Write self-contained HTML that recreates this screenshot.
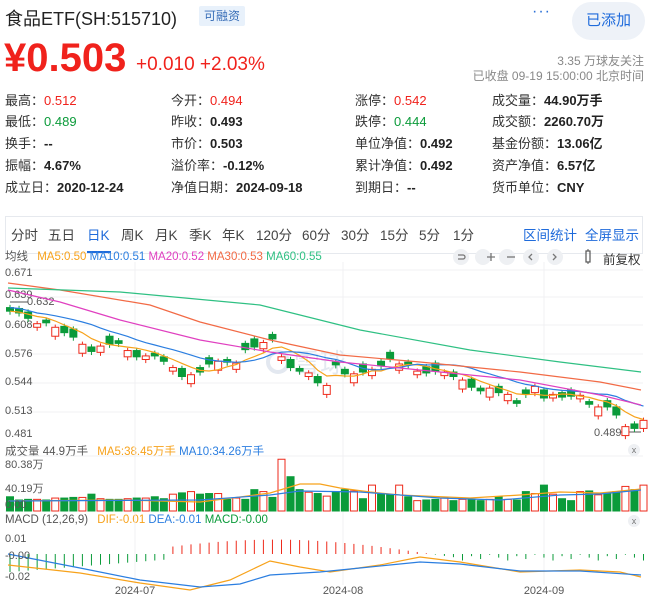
<!DOCTYPE html>
<html><head><meta charset="utf-8"><style>
body{margin:0;width:649px;height:599px;overflow:hidden;background:#fff;font-family:"Liberation Sans","Noto Sans CJK SC",sans-serif;color:#333;position:relative}
.a{position:absolute;white-space:nowrap}
.r{color:#f0221c}.g{color:#0b9b3a}
.st{font-size:13px;color:#333}
.st b{font-weight:bold;color:#222}
.tab{font-size:13.5px;color:#444}
</style></head><body>
<div class="a" style="left:5px;top:5px;font-size:18px;color:#222">食品ETF(SH:515710)</div>
<div class="a" style="left:199px;top:6px;width:46px;height:20px;background:#e8f1fb;color:#3a6fb8;font-size:12px;line-height:20px;text-align:center;border-radius:2px">可融资</div>
<div class="a" style="left:532px;top:3px;font-size:16px;color:#2a6fd6;letter-spacing:1px">···</div>
<div class="a" style="left:572px;top:2px;width:73px;height:38px;background:#eef2f8;border-radius:19px;color:#1f6bdb;font-size:15px;line-height:38px;text-align:center">已添加</div>
<div class="a r" style="left:4px;top:36px;font-size:40px;font-weight:bold;letter-spacing:0px">¥0.503</div>
<div class="a r" style="left:136px;top:54px;font-size:19px">+0.010 +2.03%</div>
<div class="a" style="right:5px;top:52px;font-size:12px;color:#888">3.35 万球友关注</div>
<div class="a" style="right:5px;top:67px;font-size:12px;color:#888">已收盘 09-19 15:00:00 北京时间</div>
<div class="a st" style="left:5px;top:90px">最高：<span class="r">0.512</span></div>
<div class="a st" style="left:171px;top:90px">今开：<span class="r">0.494</span></div>
<div class="a st" style="left:355px;top:90px">涨停：<span class="r">0.542</span></div>
<div class="a st" style="left:492px;top:90px">成交量：<b>44.90万手</b></div>
<div class="a st" style="left:5px;top:111px">最低：<span class="g">0.489</span></div>
<div class="a st" style="left:171px;top:111px">昨收：<b>0.493</b></div>
<div class="a st" style="left:355px;top:111px">跌停：<span class="g">0.444</span></div>
<div class="a st" style="left:492px;top:111px">成交额：<b>2260.70万</b></div>
<div class="a st" style="left:5px;top:133px">换手：<b>--</b></div>
<div class="a st" style="left:171px;top:133px">市价：<b>0.503</b></div>
<div class="a st" style="left:355px;top:133px">单位净值：<b>0.492</b></div>
<div class="a st" style="left:492px;top:133px">基金份额：<b>13.06亿</b></div>
<div class="a st" style="left:5px;top:155px">振幅：<b>4.67%</b></div>
<div class="a st" style="left:171px;top:155px">溢价率：<b>-0.12%</b></div>
<div class="a st" style="left:355px;top:155px">累计净值：<b>0.492</b></div>
<div class="a st" style="left:492px;top:155px">资产净值：<b>6.57亿</b></div>
<div class="a st" style="left:5px;top:177px">成立日：<b>2020-12-24</b></div>
<div class="a st" style="left:171px;top:177px">净值日期：<b>2024-09-18</b></div>
<div class="a st" style="left:355px;top:177px">到期日：<b>--</b></div>
<div class="a st" style="left:492px;top:177px">货币单位：<b>CNY</b></div>

<div class="a" style="left:5px;top:216px;width:638px;height:38px;border:1px solid #e6e9ee;box-sizing:border-box"></div>
<div class="a tab" style="left:11px;top:224px">分时</div>
<div class="a tab" style="left:48px;top:224px">五日</div>
<div class="a tab" style="left:87px;top:224px;color:#1f6bdb">日K</div>
<div class="a" style="left:87px;top:251px;width:24px;height:2px;background:#1f6bdb"></div>
<div class="a tab" style="left:121px;top:224px">周K</div>
<div class="a tab" style="left:155px;top:224px">月K</div>
<div class="a tab" style="left:189px;top:224px">季K</div>
<div class="a tab" style="left:222px;top:224px">年K</div>
<div class="a tab" style="left:256px;top:224px">120分</div>
<div class="a tab" style="left:302px;top:224px">60分</div>
<div class="a tab" style="left:341px;top:224px">30分</div>
<div class="a tab" style="left:380px;top:224px">15分</div>
<div class="a tab" style="left:419px;top:224px">5分</div>
<div class="a tab" style="left:453px;top:224px">1分</div>
<div class="a tab" style="left:523px;top:224px;color:#1f6bdb">区间统计</div>
<div class="a tab" style="left:585px;top:224px;color:#1f6bdb">全屏显示</div>

<div class="a" style="left:5px;top:248px;font-size:11.5px;color:#555">均线 <span style="color:#f7a21b;margin-left:6px">MA5:0.50</span> <span style="color:#2b7ee0">MA10:0.51</span> <span style="color:#e040c0">MA20:0.52</span> <span style="color:#f26a45">MA30:0.53</span> <span style="color:#2fc083">MA60:0.55</span></div>
<div class="a" style="left:603px;top:249px;font-size:12.5px;color:#333">前复权</div>
<div class="a" style="left:5px;top:443px;font-size:11.5px;color:#555">成交量 44.9万手 <span style="color:#f7a21b;margin-left:6px">MA5:38.45万手</span> <span style="color:#2b7ee0">MA10:34.26万手</span></div>
<div class="a" style="left:5px;top:514px;font-size:11.5px;color:#555">MACD (12,26,9) <span style="color:#f7a21b;margin-left:6px">DIF:-0.01</span> <span style="color:#2b7ee0">DEA:-0.01</span> <span style="color:#0b9b3a">MACD:-0.00</span></div>

<svg id="s" class="a" style="left:0;top:0" width="649" height="599"></svg>
<script>
var s=document.getElementById('s'),h='';
function T(x,y,t,c,sz,a){h+='<text x="'+x+'" y="'+y+'" fill="'+(c||'#555')+'" font-size="'+(sz||11.5)+'" text-anchor="'+(a||'start')+'" font-family="Liberation Sans,Noto Sans CJK SC,sans-serif">'+t+'</text>';}
[486,508,532,556,580].forEach(function(x,i){h+='<circle cx="'+(x-25)+'" cy="257" r="8" fill="#eef0f3"/>';});
var ic=['M458 255h5a2 2 0 0 1 0 4h-5','M491 253v8M487 257h8','M507 257h8','M532 254l-3 3 3 3','M553 254l3 3-3 3'];
ic.forEach(function(d){h+='<path d="'+d+'" stroke="#777" stroke-width="1.3" fill="none"/>';});
h+='<rect x="586" y="251" width="4" height="11" fill="none" stroke="#555" stroke-width="1.2"/><path d="M588 249v2M588 262v2" stroke="#555"/>';
[270,297,325,354,383,412].forEach(function(y){h+='<line x1="5" x2="643" y1="'+y+'" y2="'+y+'" stroke="#f0f1f3"/>';});
[135,343,544].forEach(function(x){h+='<line x1="'+x+'" x2="'+x+'" y1="262" y2="585" stroke="#f0f1f3"/>';});
[['0.671',276],['0.639',298],['0.608',328],['0.576',357],['0.544',385],['0.513',414],['0.481',437]].forEach(function(a){T(5,a[1],a[0],'#555',11);});
T(27,305,'0.632','#555',11);h+='<line x1="10" x2="28" y1="302" y2="302" stroke="#555"/>';
T(594,436,'0.489','#555',11);h+='<line x1="620" x2="641" y1="432" y2="432" stroke="#555"/>';
h+='<circle cx="278" cy="362" r="10" fill="none" stroke="#e3e8f0" stroke-width="4"/><text x="294" y="372" fill="#e3e8f0" font-size="26" font-family="Noto Sans CJK SC">雪球</text>';
var C=[.625,.623,.617,.611,.612,.607,.601,.596,.588,.58,.586,.588,.589,.581,.574,.575,.575,.569,.562,.552,.554,.557,.566,.569,.568,.567,.582,.585,.59,.594,.574,.562,.558,.556,.545,.542,.565,.555,.555,.557,.56,.564,.572,.566,.565,.558,.556,.558,.557,.552,.548,.54,.536,.539,.534,.532,.522,.532,.541,.528,.532,.529,.53,.531,.521,.518,.518,.509,.496,.494,.503];
var n=C.length,x0=10,dx=9.05;function Y(p){return 270+(0.671-p)*895;}
var O=[C[0]+.004];for(var i=1;i<n;i++){var up=(i*7%5)<2;O[i]=up?C[i]-(.004+(i%3)*.003):C[i]+(.003+(i%4)*.002);}
O[n-1]=.494;
for(i=0;i<n;i++){var x=x0+i*dx,o=O[i],c=C[i],u=c>=o,col=u?'#ee2a1b':'#0b9b3a';var hi=Math.max(o,c)+.003,lo=Math.min(o,c)-.004;
h+='<line x1="'+x+'" x2="'+x+'" y1="'+Y(hi)+'" y2="'+Y(lo)+'" stroke="'+col+'"/>';
var t=Y(Math.max(o,c)),hh=Math.max(1.5,Y(Math.min(o,c))-t);
h+='<rect x="'+(x-3.5)+'" y="'+t+'" width="7" height="'+hh+'" fill="'+(u?'#fff':col)+'" stroke="'+col+'"/>';}
function ma(k,col,off){var p='';for(i=0;i<n;i++){var sm=0,m=0;for(var j=Math.max(0,i-k+1);j<=i;j++){sm+=C[j];m++;}var v=sm/m+off;p+=(i?'L':'M')+(x0+i*dx).toFixed(1)+' '+Y(v).toFixed(1);}h+='<path d="'+p+'" stroke="'+col+'" fill="none" stroke-width="1.2"/>';}
ma(5,'#f7a21b',0);ma(10,'#2b7ee0',.004);
h+='<path d="M8 290L60 302L120 320L200 340L270 352L340 362L420 370L520 380L600 395L641 405" stroke="#e040c0" fill="none" stroke-width="1.2"/>';
h+='<path d="M8 283L60 290L150 305L200 322L270 340L340 355L420 362L520 372L600 382L641 390" stroke="#f26a45" fill="none" stroke-width="1.2"/>';
h+='<path d="M8 288L120 292L260 305L360 330L470 350L560 362L641 372" stroke="#2fc083" fill="none" stroke-width="1.2"/>';
h+='<line x1="5" x2="643" y1="456" y2="456" stroke="#f0f1f3"/><line x1="5" x2="643" y1="511" y2="511" stroke="#f0f1f3"/>';
h+='<circle cx="634" cy="450" r="6" fill="#eef0f3"/><text x="634" y="453" font-size="9" fill="#777" text-anchor="middle">x</text>';
h+='<circle cx="634" cy="521" r="6" fill="#eef0f3"/><text x="634" y="524" font-size="9" fill="#777" text-anchor="middle">x</text>';
var V=[22,17,18,18,17,20,20,21,21,26,19,18,18,19,20,20,22,19,26,28,30,26,27,27,18,20,18,33,30,21,80,53,33,29,27,23,29,33,31,19,40,26,25,40,22,16,17,18,20,16,18,18,16,18,22,18,17,30,27,40,26,19,16,30,31,25,27,30,38,33,40];
var vb=511,vs=52/80.38;
for(i=0;i<n;i++){var x=x0+i*dx,u=C[i]>=O[i],col=u?'#ee2a1b':'#0b9b3a',hv=V[i]*vs;h+='<rect x="'+(x-3.5)+'" y="'+(vb-hv)+'" width="7" height="'+hv+'" fill="'+(u?'#fff':col)+'" stroke="'+col+'"/>';}
h+='<path d="M8 501L120 500L200 502L240 497L270 493L300 484L320 484L340 488L370 492L400 495L470 498L520 495L560 492L600 493L641 489" stroke="#f7a21b" fill="none" stroke-width="1.2"/>';
h+='<path d="M8 501L200 500L270 495L300 491L360 492L440 498L500 500L560 495L600 494L641 490" stroke="#2b7ee0" fill="none" stroke-width="1.2"/>';
T(5,468,'80.38万','#555',11);T(5,492,'40.19万','#555',11);T(5,508,'0.00','#555',11);
var mz=554;
for(i=0;i<n;i++){var x=x0+i*dx,v=Math.sin((i-12)/11)*8;if(i<18)v=-10+i*0.4;if(i>=50)v=-2+((i*3)%5-2)*0.8;var col=v>=0?'#ee2a1b':'#0b9b3a';h+='<line x1="'+x+'" x2="'+x+'" y1="'+mz+'" y2="'+(mz-v*1.8)+'" stroke="'+col+'"/>';}
h+='<path d="M8 565L80 573L140 583L190 590L230 580L270 561L300 567L330 572L380 565L420 557L460 562L520 572L580 570L620 572L641 577" stroke="#f7a21b" fill="none" stroke-width="1.2"/>';
h+='<path d="M8 554L80 568L140 580L200 587L240 584L270 575L320 572L360 568L420 562L460 564L520 571L580 571L641 575" stroke="#2b7ee0" fill="none" stroke-width="1.2"/>';
T(5,542,'0.01','#555',11);T(5,559,'-0.00','#555',11);T(5,580,'-0.02','#555',11);
T(135,594,'2024-07','#555',11,'middle');T(343,594,'2024-08','#555',11,'middle');T(544,594,'2024-09','#555',11,'middle');
s.innerHTML=h;
</script>
</body></html>
